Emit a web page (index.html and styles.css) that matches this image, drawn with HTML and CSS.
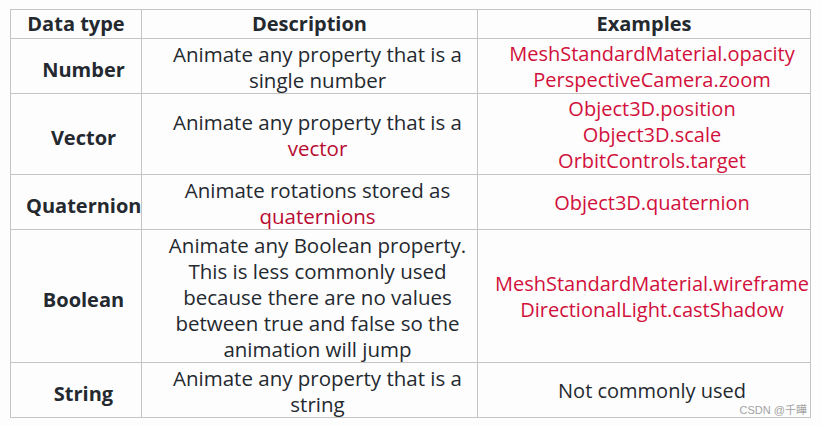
FILE: index.html
```html
<!DOCTYPE html>
<html>
<head>
<meta charset="utf-8">
<link rel="stylesheet" href="styles.css">
</head>
<body>
<div class="wrap">
<table class="types">
  <colgroup>
    <col class="c1">
    <col class="c2">
    <col class="c3">
  </colgroup>
  <thead>
    <tr><th>Data type</th><th>Description</th><th>Examples</th></tr>
  </thead>
  <tbody>
    <tr class="r-number">
      <td class="name"><span class="nm">Number</span></td>
      <td class="desc">Animate any property that is a single number</td>
      <td class="ex"><span class="red">MeshStandardMaterial.opacity</span><br><span class="red">PerspectiveCamera.zoom</span></td>
    </tr>
    <tr class="r-vector">
      <td class="name"><span class="nm">Vector</span></td>
      <td class="desc">Animate any property that is a <span class="link">vector</span></td>
      <td class="ex"><span class="red">Object3D.position</span><br><span class="red">Object3D.scale</span><br><span class="red">OrbitControls.target</span></td>
    </tr>
    <tr class="r-quat">
      <td class="name"><span class="nm">Quaternion</span></td>
      <td class="desc">Animate rotations stored as <span class="link">quaternions</span></td>
      <td class="ex"><span class="red">Object3D.quaternion</span></td>
    </tr>
    <tr class="r-bool">
      <td class="name"><span class="nm">Boolean</span></td>
      <td class="desc">Animate any Boolean property. This is less commonly used because there are no values between true and false so the animation will jump</td>
      <td class="ex"><span class="red">MeshStandardMaterial.wireframe</span><br><span class="red">DirectionalLight.castShadow</span></td>
    </tr>
    <tr class="r-string">
      <td class="name"><span class="nm">String</span></td>
      <td class="desc">Animate any property that is a string</td>
      <td class="ex">Not commonly used</td>
    </tr>
  </tbody>
</table>
<div class="mark">CSDN @千瞱</div>
</div>
</body>
</html>
```

FILE: styles.css
```css
html, body {
  margin: 0;
  background: #fdfdfd;
}
body {
  padding: 9px 10px;
  font-family: "Open Sans", "Noto Sans", "Noto Sans CJK SC", sans-serif;
  color: #24292f;
}
.wrap {
  position: relative;
  width: 800px;
}
.types {
  border-collapse: collapse;
  table-layout: fixed;
  width: 800px;
  font-size: 20.5px;
  line-height: 26px;
}
.c1 { width: 131px; }
.c2 { width: 336px; }
.c3 { width: 333px; }
.types th, .types td {
  border: 1px solid #c4c4c4;
  text-align: center;
  vertical-align: middle;
}
.types th {
  font-weight: 700;
  font-size: 20px;
  padding: 1px 0;
}
.types td {
  padding: 2px 0 0 16px;
}
.types td.name {
  font-weight: 700;
  font-size: 20px;
  padding-left: 15px;
  white-space: nowrap;
}
.nm {
  display: block;
  padding-top: 6px;
}
.types td.ex {
  font-size: 20px;
  white-space: nowrap;
}
.red { color: #d1103b; }
.link { color: #b80b31; }
.r-number td { height: 52px; }
.r-vector td { height: 77px; }
.r-quat td { height: 50px; }
.r-bool td { height: 130px; }
.r-string td { height: 51px; }
.mark {
  position: absolute;
  right: 3px;
  bottom: 1px;
  font-family: "Liberation Sans", "Noto Sans CJK SC", sans-serif;
  font-size: 11px;
  line-height: 13px;
  color: #a3a3a3;
}
```
